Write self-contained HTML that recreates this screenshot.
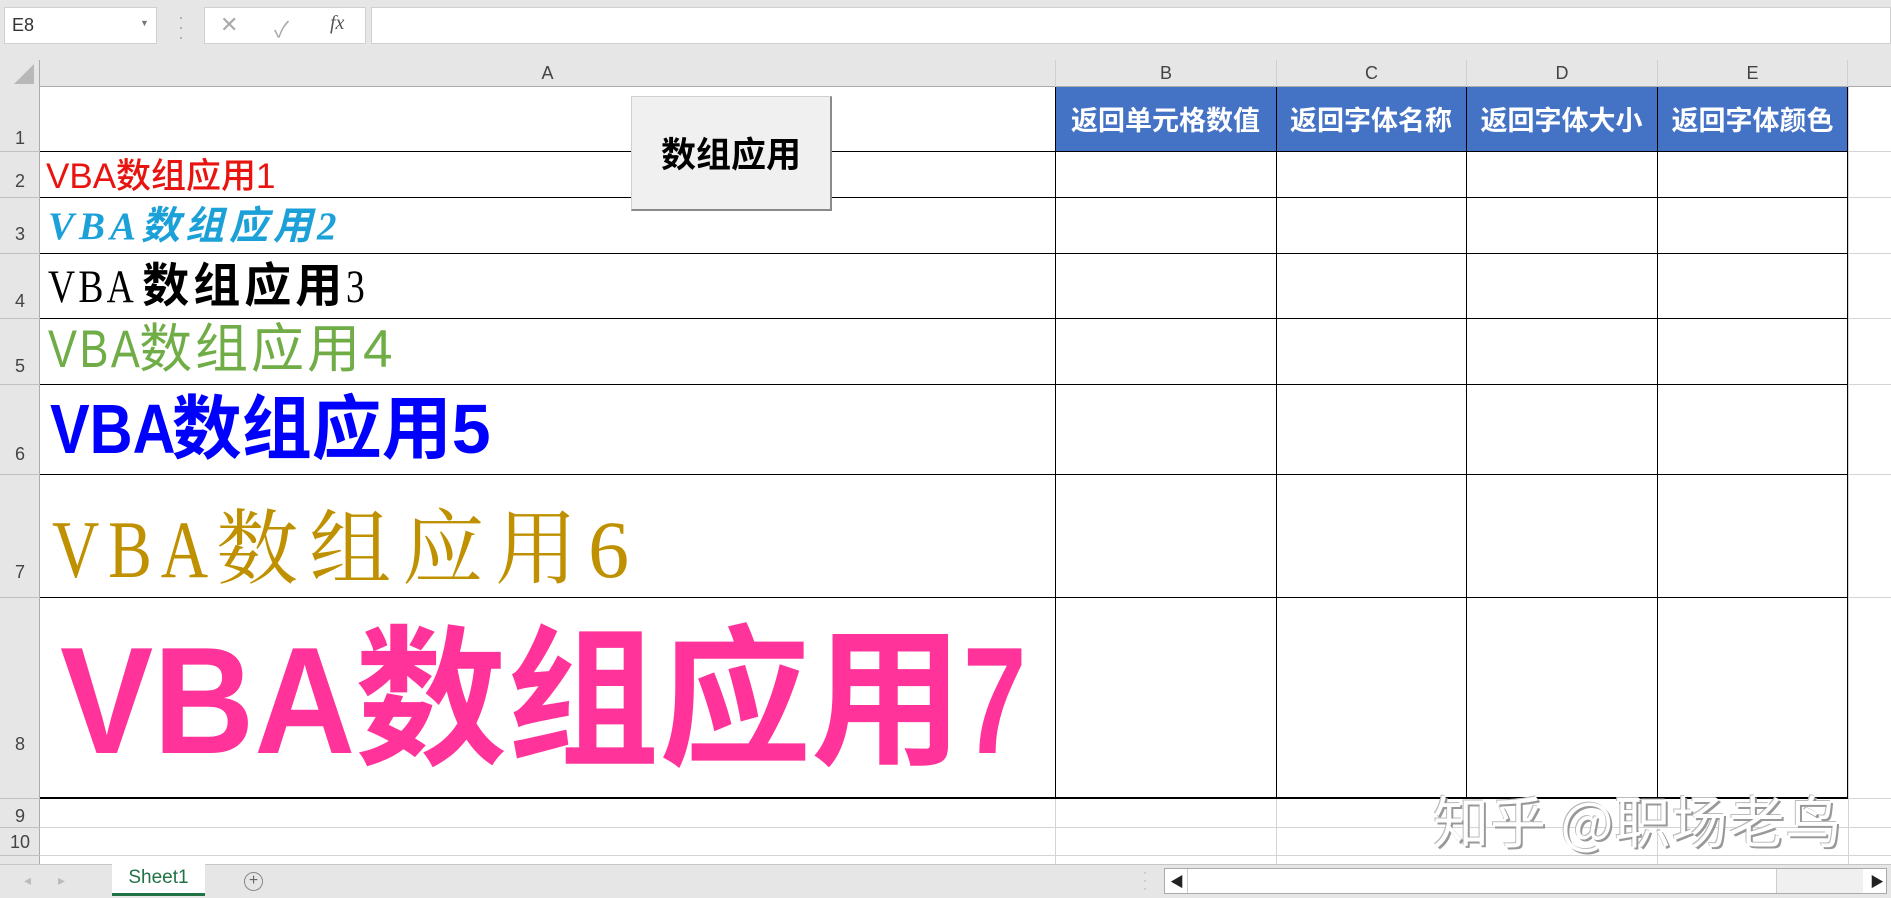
<!DOCTYPE html>
<html><head><meta charset="utf-8">
<style>
*{margin:0;padding:0;box-sizing:border-box}
body{width:1891px;height:898px;position:relative;overflow:hidden;background:#fff;font-family:"Liberation Sans","Noto Sans CJK SC",sans-serif}
.a{position:absolute}
.hl{position:absolute;height:1px}
.vl{position:absolute;width:1px}
.rn{position:absolute;left:0;width:40px;text-align:center;font-size:18px;color:#444;line-height:20px}
.ch{position:absolute;top:60px;height:27px;text-align:center;font-size:18px;color:#444;line-height:27px}
.hd{position:absolute;top:87px;height:64px;background:#4472c4;color:#fff;font-weight:bold;font-size:27px;line-height:64px;text-align:center;font-family:"Noto Sans CJK SC",sans-serif;white-space:nowrap}
.t{position:absolute;white-space:nowrap;line-height:1}
</style></head><body>
<div class="a" style="left:0;top:0;width:1891px;height:60px;background:#e6e6e6"></div>
<div class="a" style="left:4px;top:7px;width:153px;height:37px;background:#fff;border:1px solid #d0d0d0"></div>
<div class="a" style="left:12px;top:15px;font-size:18px;color:#333">E8</div>
<div class="a" style="left:140px;top:18px;font-size:9px;color:#777">▼</div>
<div class="a" style="left:178px;top:12px;font-size:18px;color:#aaa;line-height:10px">·<br>·<br>·</div>
<div class="a" style="left:204px;top:7px;width:162px;height:37px;background:#fff;border:1px solid #d0d0d0"></div>
<div class="a" style="left:220px;top:12px;font-size:22px;color:#aaa">✕</div>
<div class="a" style="left:274px;top:12px;font-size:22px;color:#aaa">✓</div>
<div class="a" style="left:330px;top:12px;font-size:20px;color:#555;font-style:italic;font-family:'Liberation Serif',serif">fx</div>
<div class="a" style="left:371px;top:7px;width:1520px;height:37px;background:#fff;border:1px solid #d0d0d0"></div>
<div class="a" style="left:0;top:60px;width:1891px;height:27px;background:#e6e6e6;border-bottom:1px solid #ababab"></div>
<div class="a" style="left:0;top:60px;width:40px;height:838px;background:#e6e6e6;border-right:1px solid #ababab"></div>
<div class="a" style="left:14px;top:64px;width:0;height:0;border-left:20px solid transparent;border-bottom:20px solid #b8b8b8"></div>
<div class="ch" style="left:40px;width:1015px">A</div>
<div class="ch" style="left:1055px;width:221px;border-left:1px solid #d0d0d0">B</div>
<div class="ch" style="left:1276px;width:190px;border-left:1px solid #d0d0d0">C</div>
<div class="ch" style="left:1466px;width:191px;border-left:1px solid #d0d0d0">D</div>
<div class="ch" style="left:1657px;width:191px;border-left:1px solid #d0d0d0;border-right:1px solid #d0d0d0">E</div>
<div class="rn" style="top:128px">1</div>
<div class="rn" style="top:171px">2</div>
<div class="rn" style="top:224px">3</div>
<div class="rn" style="top:291px">4</div>
<div class="rn" style="top:356px">5</div>
<div class="rn" style="top:444px">6</div>
<div class="rn" style="top:562px">7</div>
<div class="rn" style="top:734px">8</div>
<div class="rn" style="top:806px">9</div>
<div class="rn" style="top:832px">10</div>
<div class="hl" style="left:40px;top:827px;width:1851px;background:#d4d4d4"></div>
<div class="hl" style="left:40px;top:855px;width:1851px;background:#d4d4d4"></div>
<div class="hl" style="left:0;top:827px;width:40px;background:#c0c0c0"></div>
<div class="hl" style="left:0;top:855px;width:40px;background:#c0c0c0"></div>
<div class="vl" style="left:1055px;top:798px;height:66px;background:#d4d4d4"></div>
<div class="vl" style="left:1276px;top:798px;height:66px;background:#d4d4d4"></div>
<div class="vl" style="left:1657px;top:798px;height:66px;background:#d4d4d4"></div>
<div class="vl" style="left:1848px;top:87px;height:777px;background:#d4d4d4"></div>
<div class="hl" style="left:1848px;top:151px;width:43px;background:#d4d4d4"></div>
<div class="hl" style="left:1848px;top:197px;width:43px;background:#d4d4d4"></div>
<div class="hl" style="left:1848px;top:253px;width:43px;background:#d4d4d4"></div>
<div class="hl" style="left:1848px;top:318px;width:43px;background:#d4d4d4"></div>
<div class="hl" style="left:1848px;top:384px;width:43px;background:#d4d4d4"></div>
<div class="hl" style="left:1848px;top:474px;width:43px;background:#d4d4d4"></div>
<div class="hl" style="left:1848px;top:597px;width:43px;background:#d4d4d4"></div>
<div class="hl" style="left:1848px;top:798px;width:43px;background:#d4d4d4"></div>
<div class="hl" style="left:0;top:151px;width:40px;background:#c0c0c0"></div>
<div class="hl" style="left:0;top:197px;width:40px;background:#c0c0c0"></div>
<div class="hl" style="left:0;top:253px;width:40px;background:#c0c0c0"></div>
<div class="hl" style="left:0;top:318px;width:40px;background:#c0c0c0"></div>
<div class="hl" style="left:0;top:384px;width:40px;background:#c0c0c0"></div>
<div class="hl" style="left:0;top:474px;width:40px;background:#c0c0c0"></div>
<div class="hl" style="left:0;top:597px;width:40px;background:#c0c0c0"></div>
<div class="hl" style="left:0;top:798px;width:40px;background:#c0c0c0"></div>
<div class="hd" style="left:1055px;width:221px">返回单元格数值</div>
<div class="hd" style="left:1276px;width:190px">返回字体名称</div>
<div class="hd" style="left:1466px;width:191px">返回字体大小</div>
<div class="hd" style="left:1657px;width:191px">返回字体颜色</div>
<div class="hl" style="left:40px;top:151px;width:1808px;background:#000"></div>
<div class="hl" style="left:40px;top:197px;width:1808px;background:#000"></div>
<div class="hl" style="left:40px;top:253px;width:1808px;background:#000"></div>
<div class="hl" style="left:40px;top:318px;width:1808px;background:#000"></div>
<div class="hl" style="left:40px;top:384px;width:1808px;background:#000"></div>
<div class="hl" style="left:40px;top:474px;width:1808px;background:#000"></div>
<div class="hl" style="left:40px;top:597px;width:1808px;background:#000"></div>
<div class="hl" style="left:40px;top:797px;width:1808px;height:2px;background:#000"></div>
<div class="vl" style="left:1055px;top:87px;height:711px;background:#000"></div>
<div class="vl" style="left:1276px;top:87px;height:711px;background:#000"></div>
<div class="vl" style="left:1466px;top:87px;height:711px;background:#000"></div>
<div class="vl" style="left:1657px;top:87px;height:711px;background:#000"></div>
<div class="vl" style="left:1847px;top:87px;height:711px;background:#000"></div>
<div class="t" style="left:46px;top:159px;font-size:35px;color:#e8140f;font-family:'Liberation Sans','Noto Sans CJK SC',sans-serif;font-weight:500">VBA数组应用1</div>
<div class="t" style="left:48px;top:207px;font-size:39px;color:#1ba1d8;font-style:italic;font-weight:bold;font-family:'Liberation Serif','Noto Sans CJK SC',serif;letter-spacing:5px">VBA数组应用2</div>
<div class="t" style="left:48px;top:264px;font-size:47px;color:#000;font-family:'Liberation Serif','Noto Sans CJK SC',serif;letter-spacing:4px"><span style="display:inline-block;transform:scaleX(.8);transform-origin:left;margin-right:-17px">VBA</span><b>数组应用</b><span style="display:inline-block;transform:scaleX(.8);transform-origin:left">3</span></div>
<div class="t" style="left:48px;top:323px;font-size:53px;color:#70ad47;font-family:'Liberation Sans','Noto Sans CJK SC',sans-serif;letter-spacing:3px"><span style="display:inline-block;transform:scaleX(.82);transform-origin:left;margin-right:-24px">VBA</span>数组应用4</div>
<div class="t" style="left:50px;top:394px;font-size:70px;color:#0000ff;font-weight:bold;font-family:'Liberation Sans','Noto Sans CJK SC',sans-serif"><span style="display:inline-block;transform:scaleX(.85);transform-origin:left;margin-right:-26px">VBA</span>数组应用5</div>
<div class="t" style="left:52px;top:509px;font-size:82px;color:#bf9000;font-family:'Liberation Serif','Noto Serif CJK SC',serif;letter-spacing:11px"><span style="display:inline-block;transform:scaleX(.8);transform-origin:left;margin-right:-42px">VBA</span>数组应用6</div>
<div class="t" style="left:60px;top:625px;font-size:152px;color:#ff3399;font-weight:bold;font-family:'Liberation Sans','Noto Sans CJK SC',sans-serif"><span style="display:inline-block;transform:scaleX(.92);transform-origin:left;margin-right:-26px">VBA</span>数组应用<span style="display:inline-block;transform:scaleX(.75);transform-origin:left">7</span></div>
<div class="a" style="left:631px;top:96px;width:201px;height:115px;background:#f0f0f0;border:1px solid #d0d0d0;border-right:2px solid #8a8a8a;border-bottom:2px solid #8a8a8a;text-align:center;line-height:112px;font-size:35px;font-weight:bold;font-family:'Noto Sans CJK SC',sans-serif;color:#000">数组应用</div>
<div class="t" style="left:1433px;top:792px;font-size:56px;color:#fff;font-family:'Noto Sans CJK SC',sans-serif;letter-spacing:1px;text-shadow:2px 2px 0 #999,-1px -1px 0 #bbb">知乎 @职场老鸟</div>
<div class="a" style="left:0;top:864px;width:1891px;height:34px;background:#e6e6e6;border-top:1px solid #c6c6c6"></div>
<div class="a" style="left:24px;top:872px;font-size:14px;color:#bbb">◂</div>
<div class="a" style="left:58px;top:872px;font-size:14px;color:#bbb">▸</div>
<div class="a" style="left:112px;top:863px;width:93px;height:33px;background:#fff;border-bottom:3px solid #217346;text-align:center;line-height:30px;font-size:19px;color:#217346">Sheet1</div>
<div class="a" style="left:244px;top:872px;width:19px;height:19px;border:1px solid #888;border-radius:50%;text-align:center;line-height:16px;font-size:16px;color:#666">+</div>
<div class="a" style="left:1143px;top:868px;font-size:12px;color:#aaa;line-height:8px">·<br>·<br>·</div>
<div class="a" style="left:1164px;top:868px;width:723px;height:26px;background:#fff;border:1px solid #aaa"></div>
<div class="a" style="left:1187px;top:869px;width:590px;height:24px;background:#fff;border-left:1px solid #ccc;border-right:1px solid #ccc"></div>
<div class="a" style="left:1777px;top:869px;width:86px;height:24px;background:#f0f0f0"></div>
<div class="a" style="left:1170px;top:872px;font-size:14px;color:#222">◀</div>
<div class="a" style="left:1870px;top:872px;font-size:14px;color:#222">▶</div>
</body></html>
